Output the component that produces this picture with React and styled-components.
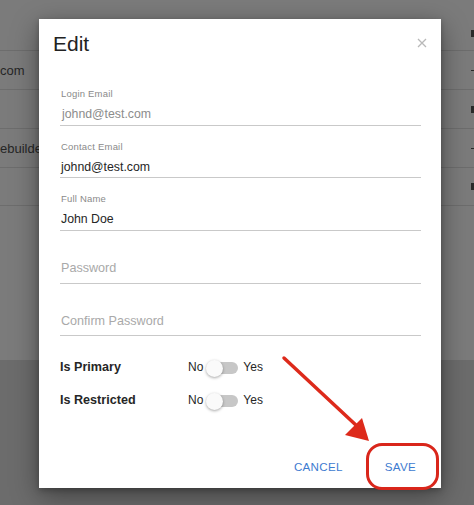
import React from 'react'
import styled, { createGlobalStyle } from 'styled-components'

const GlobalStyle = createGlobalStyle`
  html, body { margin: 0; padding: 0; background: #6d6d6d; }
  body { font-family: "Liberation Sans", Arial, sans-serif; }
  * { box-sizing: border-box; }
`

const Page = styled.div`
  position: relative;
  width: 474px;
  height: 505px;
  overflow: hidden;
  background: #6c6c6c;
`

/* dimmed table behind the dialog */
const Table = styled.div`
  height: 360px;
  background: #7b7b7b;
`

const TableRow = styled.div`
  height: ${p => p.h}px;
  border-bottom: 1px solid #6d6d6d;
  display: flex;
  align-items: ${p => (p.header ? 'flex-end' : 'center')};
  padding-bottom: ${p => (p.header ? '13px' : '0')};
  justify-content: space-between;
  font-size: 13px;
  color: #262626;
`

const Cell = styled.span`
  width: 39px;
  overflow: hidden;
  white-space: nowrap;
`

const EdgeMark = styled.span`
  width: 3px;
  height: ${p => (p.dash ? '1px' : '7px')};
  background: #2a2a2a;
`

const Modal = styled.div`
  position: absolute;
  left: 39px;
  top: 19px;
  width: 402px;
  height: 469px;
  background: #fff;
  box-shadow: 0 8px 26px rgba(0, 0, 0, 0.4), 0 2px 6px rgba(0, 0, 0, 0.25);
  display: flex;
  flex-direction: column;
`

const Header = styled.div`
  height: 54px;
  padding: 13px 14px 0 14px;
  display: flex;
  justify-content: space-between;
  align-items: flex-start;
`

const Title = styled.h2`
  margin: 0;
  font-size: 21px;
  line-height: 24px;
  font-weight: normal;
  color: #222;
`

const Close = styled.button`
  border: 0;
  padding: 0;
  margin-top: 6px;
  background: none;
  width: 10px;
  height: 10px;
  display: flex;
`

const Body = styled.div`
  padding: 0 20px 0 21px;
`

const Field = styled.div`
  height: 52.7px;
  padding-top: ${p => (p.empty ? '27px' : '15px')};
  border-bottom: 1px solid #c9c9c9;
`

const Label = styled.div`
  font-size: 9.5px;
  line-height: 12px;
  color: #8a8a8a;
  letter-spacing: 0.2px;
  padding-left: 1px;
  margin-bottom: 4px;
`

const Value = styled.div`
  line-height: 20px;
  padding-left: ${p => (p.muted ? '2px' : '1px')};
  color: ${p => (p.placeholder ? '#a9a9a9' : p.muted ? '#8c8c8c' : '#262626')};
  font-size: ${p => (p.placeholder ? '12.6px' : '12.3px')};
`

const Toggles = styled.div`
  padding-top: 15px;
`

const ToggleRow = styled.div`
  height: 33px;
  display: flex;
  align-items: center;
`

const ToggleLabel = styled.div`
  width: 128px;
  font-size: 12.6px;
  font-weight: bold;
  color: #262626;
  margin-top: -2px;
`

const Choice = styled.span`
  font-size: 12px;
  color: #262626;
  margin-top: -2px;
`

const Switch = styled.span`
  position: relative;
  width: 34px;
  height: 18px;
  margin: 0 3px;
`

const Track = styled.span`
  position: absolute;
  left: 4px;
  right: 2px;
  top: 3px;
  height: 12px;
  border-radius: 6px;
  background: #c7c7c7;
`

const Thumb = styled.span`
  position: absolute;
  left: 0;
  top: 1px;
  width: 17px;
  height: 17px;
  border-radius: 50%;
  background: #fafafa;
  box-shadow: 0 1px 3px rgba(0, 0, 0, 0.35);
`

const Actions = styled.div`
  margin-top: auto;
  height: 44px;
  padding-right: 9px;
  display: flex;
  justify-content: flex-end;
  align-items: center;
  gap: 10px;
`

const TextButton = styled.button`
  border: 0;
  background: none;
  padding: 8px 16px;
  font-family: inherit;
  font-size: 11.6px;
  letter-spacing: 0.3px;
  color: #3d7bd0;
  text-transform: uppercase;
`

const Annotation = styled.svg`
  position: absolute;
  left: 0;
  top: 0;
  pointer-events: none;
`

const Highlight = styled.div`
  position: absolute;
  left: 366px;
  top: 443px;
  width: 73px;
  height: 47px;
  border: 3.5px solid #d9261b;
  border-radius: 16px;
`

const rows = [
  { h: 51, header: true, left: '', mark: 'block' },
  { h: 39, left: 'com', mark: 'dash' },
  { h: 39, left: '', mark: 'block' },
  { h: 39, left: 'ebuilder.com', mark: 'dash' },
  { h: 38, left: '', mark: 'block' },
]

const fields = [
  { label: 'Login Email', value: 'johnd@test.com', muted: true },
  { label: 'Contact Email', value: 'johnd@test.com' },
  { label: 'Full Name', value: 'John Doe' },
  { placeholder: 'Password' },
  { placeholder: 'Confirm Password' },
]

function Toggle({ label }) {
  return (
    <ToggleRow>
      <ToggleLabel>{label}</ToggleLabel>
      <Choice>No</Choice>
      <Switch>
        <Track />
        <Thumb />
      </Switch>
      <Choice>Yes</Choice>
    </ToggleRow>
  )
}

export default function App() {
  return (
    <>
      <GlobalStyle />
      <Page>
        <Table>
          {rows.map((r, i) => (
            <TableRow key={i} h={r.h} header={r.header}>
              <Cell>{r.left}</Cell>
              <EdgeMark dash={r.mark === 'dash'} />
            </TableRow>
          ))}
        </Table>

        <Modal>
          <Header>
            <Title>Edit</Title>
            <Close aria-label="close">
              <svg width="10" height="10" viewBox="0 0 10 10">
                <path d="M1 1L9 9M9 1L1 9" stroke="#b9b9b9" strokeWidth="1.3" />
              </svg>
            </Close>
          </Header>
          <Body>
            {fields.map((f, i) =>
              f.placeholder ? (
                <Field key={i} empty>
                  <Value placeholder>{f.placeholder}</Value>
                </Field>
              ) : (
                <Field key={i}>
                  <Label>{f.label}</Label>
                  <Value muted={f.muted}>{f.value}</Value>
                </Field>
              )
            )}
            <Toggles>
              <Toggle label="Is Primary" />
              <Toggle label="Is Restricted" />
            </Toggles>
          </Body>
          <Actions>
            <TextButton>Cancel</TextButton>
            <TextButton>Save</TextButton>
          </Actions>
        </Modal>

        <Highlight />
        <Annotation width="474" height="505">
          <line x1="284" y1="358" x2="358" y2="427" stroke="#dd2a1b" strokeWidth="3.5" strokeLinecap="round" />
          <polygon points="369,441 345,435 362,418" fill="#dd2a1b" />
        </Annotation>
      </Page>
    </>
  )
}
